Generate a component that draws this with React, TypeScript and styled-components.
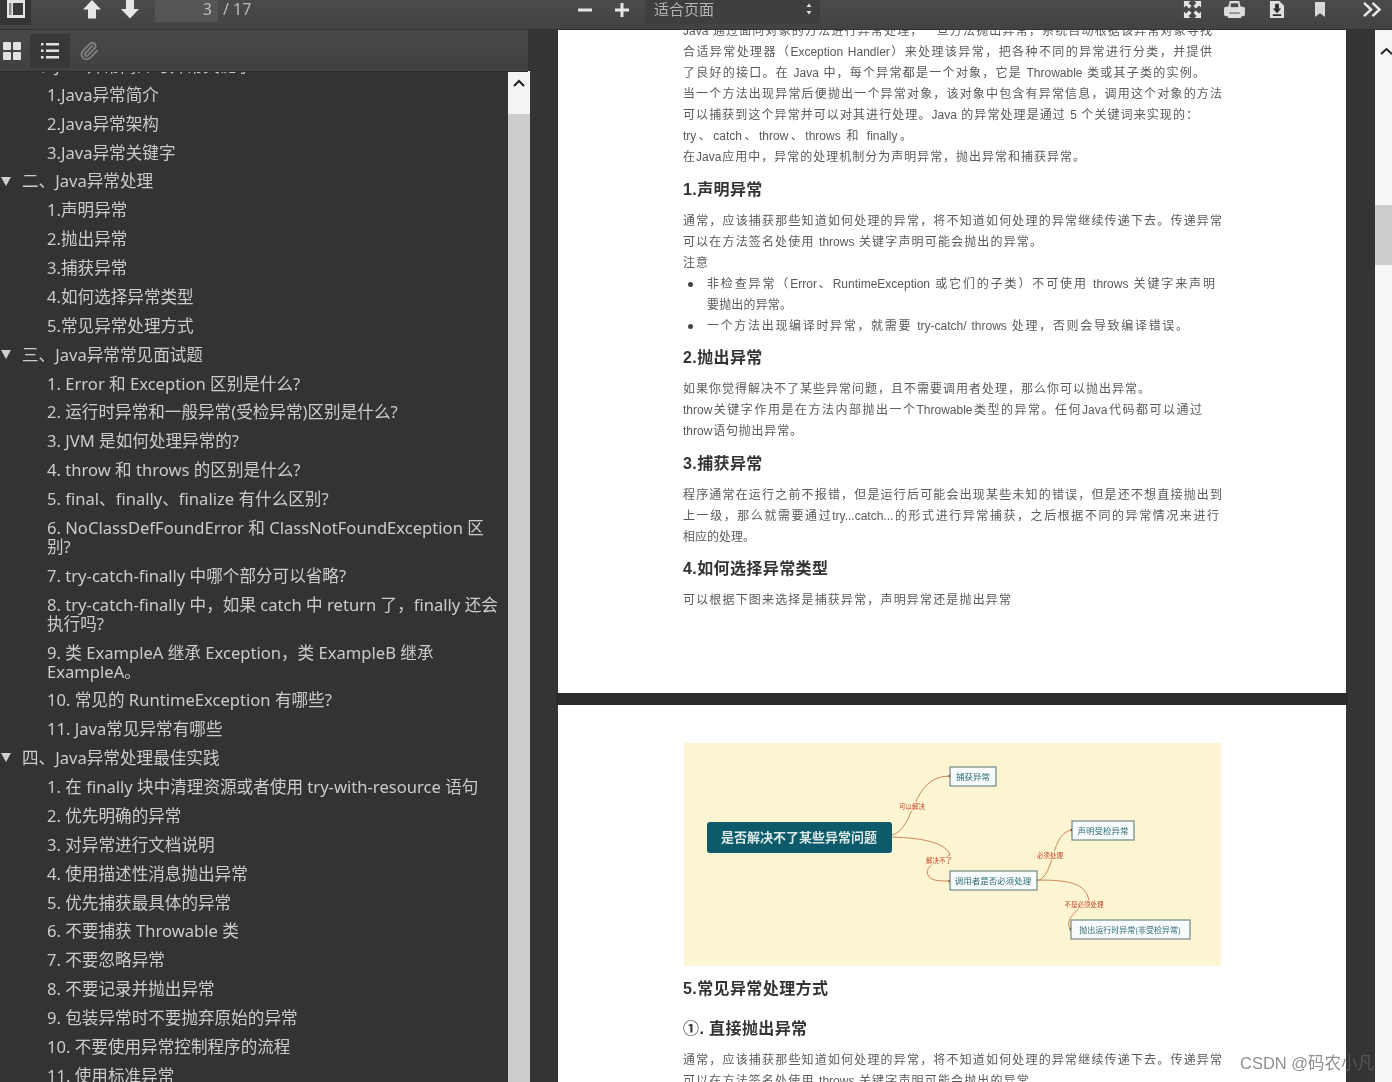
import React from "react";
import styled, { createGlobalStyle } from "styled-components";
import { Paperclip } from "lucide-react";

const Global = createGlobalStyle`
  html, body { margin: 0; padding: 0; background: #333; }
  body { width: 1392px; height: 1082px; overflow: hidden; font-family: "Noto Sans", "Noto Sans CJK SC", sans-serif; }
`;

const Shell = styled.div`
  width: 1392px; height: 1082px; display: flex; flex-direction: column; overflow: hidden; position: relative;
`;
const Toolbar = styled.header`
  flex: none; height: 30px; display: flex; align-items: flex-start; color: #ddd;
  background: linear-gradient(#4b4b4b, #424242); box-shadow: inset 0 -1px 0 #333;
`;
const ToggleButton = styled.div`
  flex: none; width: 31px; height: 25px; background: #353535; display: flex; align-items: flex-start; justify-content: center;
`;
const ToolIcon = styled.div<{ $w: number; $ml?: number }>`
  flex: none; width: ${p => p.$w}px; margin-left: ${p => p.$ml ?? 0}px; height: 19px;
  display: flex; align-items: center; justify-content: center; filter: blur(.45px);
`;
const PageInput = styled.div`
  flex: none; width: 63px; height: 22px; margin-left: 6px; background: #555; color: #bbb; font-size: 16px;
  line-height: 18px; text-align: right; padding-right: 6px; box-sizing: border-box; filter: blur(.4px);
`;
const PageCount = styled.div`
  flex: none; width: 343px; margin-left: 5px; color: #b8b8b8; font-size: 16px; line-height: 18px; filter: blur(.4px);
`;
const ZoomSelect = styled.div`
  flex: none; width: 175px; height: 24px; margin-left: 4px; background: #3f3f3f; color: #b5b5b5; font-size: 15px;
  line-height: 18px; padding: 0 8px 0 9px; box-sizing: border-box; display: flex; justify-content: space-between;
`;
const SelectLabel = styled.span`filter: blur(.5px);`;
const ToolSpacer = styled.div`flex: 1;`;

const Main = styled.div`flex: 1; min-height: 0; display: flex;`;
const Sidebar = styled.aside`flex: none; width: 530px; display: flex; flex-direction: column; background: #333;`;
const TabBar = styled.div`
  flex: none; width: 528px; height: 41px; display: flex; align-items: center; gap: 6px;
  background: linear-gradient(#484848, #414141); box-shadow: 0 1px 0 #2e2e2e; position: relative; z-index: 1;
`;
const Tab = styled.div<{ $active?: boolean; $w: number }>`
  flex: none; width: ${p => p.$w}px; height: 34px; display: flex; align-items: center; justify-content: center;
  background: ${p => (p.$active ? "#383838" : "transparent")}; filter: blur(.35px);
`;
const SideBody = styled.div`flex: 1; min-height: 0; display: flex;`;
const TocList = styled.nav`flex: 1; min-width: 0; overflow: hidden; background: #333;`;
const TocInner = styled.div`margin-top: -20px;`;
const TocRow = styled.div<{ $top?: boolean }>`
  position: relative; padding: 4.95px 0 4.95px ${p => (p.$top ? 22 : 47)}px; font-size: 16.6px; line-height: 19px;
  color: #cbcbcb; white-space: pre-line; filter: blur(.5px);
`;
const Caret = styled.i`
  position: absolute; left: 1px; top: 10px; width: 0; height: 0;
  border-left: 5px solid transparent; border-right: 5px solid transparent; border-top: 9px solid #d0d0d0;
`;
const SideScroll = styled.div`flex: none; width: 22px; background: #cdcdcd; display: flex; flex-direction: column;`;
const ScrollCap = styled.div`
  flex: none; height: 43px; background: #f4f4f4; display: flex; justify-content: center; padding-top: 8px; box-sizing: border-box;
`;
const Viewer = styled.main`flex: 1; min-width: 0; display: flex;`;
const Pages = styled.div`flex: 1; min-width: 0; overflow: hidden; padding: 0 29px 0 28px; background: #343434;`;
const Page = styled.section<{ $clip?: boolean }>`
  background: #fff; width: 788px; box-sizing: border-box; padding-left: 125px;
  ${p => p.$clip
    ? "margin-top: -9px; height: 672px;"
    : "height: 420px; padding-top: 38px;"}
`;
const PageGap = styled.div`height: 12px; background: #2b2b2b; margin: 0 0 0 -2px; width: 792px;`;
const Line = styled.div<{ $w: number }>`
  width: ${p => p.$w}px; height: 21px; line-height: 21px; font-size: 12px; color: #5a5a5a; white-space: nowrap;
  text-align: justify; text-align-last: justify; filter: blur(.45px);
  font-family: "Liberation Sans", "Noto Sans CJK SC", sans-serif;
`;
const Heading = styled.h3<{ $mt?: number }>`
  margin: ${p => p.$mt ?? 10.5}px 0 11px; height: 21px; line-height: 21px; font-size: 16px; font-weight: 700; color: #333;
  letter-spacing: .4px; filter: blur(.4px); font-family: "Liberation Sans", "Noto Sans CJK SC", sans-serif;
`;
const Bullet = styled.div`display: flex;`;
const Dot = styled.span`
  flex: none; width: 5px; height: 5px; border-radius: 50%; background: #444; margin: 8px 14px 0 5px; filter: blur(.3px);
`;
const MindMap = styled.svg`
  display: block; width: 537px; height: 223px; margin: 0 0 12px 1px; background: #fdf5d2;
`;
const MainScroll = styled.div`
  flex: none; width: 17px; background: #f6f6f8; display: flex; flex-direction: column; align-items: stretch;
`;
const MainChevron = styled.div`flex: none; height: 175px; padding: 8px 0 0 5px; box-sizing: border-box;`;
const MainThumb = styled.div`flex: none; height: 60px; background: #cdcdcd;`;
const Watermark = styled.div`
  position: absolute; left: 1240px; top: 1052px; font-size: 16.5px; line-height: 22px; color: rgba(100, 100, 100, .72);
  font-family: "Liberation Sans", "Noto Sans CJK SC", sans-serif; white-space: nowrap; filter: blur(.3px);
`;

const toc: { t: string; top?: boolean }[] = [
  { t: "一、Java异常简介与异常关键字", top: true },
  { t: "1.Java异常简介" }, { t: "2.Java异常架构" }, { t: "3.Java异常关键字" },
  { t: "二、Java异常处理", top: true },
  { t: "1.声明异常" }, { t: "2.抛出异常" }, { t: "3.捕获异常" }, { t: "4.如何选择异常类型" }, { t: "5.常见异常处理方式" },
  { t: "三、Java异常常见面试题", top: true },
  { t: "1. Error 和 Exception 区别是什么?" },
  { t: "2. 运行时异常和一般异常(受检异常)区别是什么?" },
  { t: "3. JVM 是如何处理异常的?" },
  { t: "4. throw 和 throws 的区别是什么?" },
  { t: "5. final、finally、finalize 有什么区别?" },
  { t: "6. NoClassDefFoundError 和 ClassNotFoundException 区\n别?" },
  { t: "7. try-catch-finally 中哪个部分可以省略?" },
  { t: "8. try-catch-finally 中，如果 catch 中 return 了，finally 还会\n执行吗?" },
  { t: "9. 类 ExampleA 继承 Exception，类 ExampleB 继承\nExampleA。" },
  { t: "10. 常见的 RuntimeException 有哪些?" },
  { t: "11. Java常见异常有哪些" },
  { t: "四、Java异常处理最佳实践", top: true },
  { t: "1. 在 finally 块中清理资源或者使用 try-with-resource 语句" },
  { t: "2. 优先明确的异常" },
  { t: "3. 对异常进行文档说明" },
  { t: "4. 使用描述性消息抛出异常" },
  { t: "5. 优先捕获最具体的异常" },
  { t: "6. 不要捕获 Throwable 类" },
  { t: "7. 不要忽略异常" },
  { t: "8. 不要记录并抛出异常" },
  { t: "9. 包装异常时不要抛弃原始的异常" },
  { t: "10. 不要使用异常控制程序的流程" },
  { t: "11. 使用标准异常" },
];

const Up = () => <svg width="20" height="19" viewBox="0 0 20 19"><path d="M10 0 19 9.500H14V18.500H6V9.500H1Z" fill="#e6e6e6" /></svg>;
const Down = () => <svg width="20" height="19" viewBox="0 0 20 19"><path d="M10 18.500 19 9H14V0H6V9H1Z" fill="#e6e6e6" /></svg>;

const App = () => (
  <Shell>
    <Global />
    <Toolbar>
      <ToggleButton>
        <svg width="20" height="20" viewBox="0 0 20 20">
          <rect x="1" y="0" width="18" height="18" fill="#e4e4e4" />
          <rect x="7" y="3" width="10" height="12" fill="#3a3a3a" />
          <rect x="3" y="3" width="2.500" height="12" fill="#8a8a8a" />
        </svg>
      </ToggleButton>
      <ToolIcon $w={38} $ml={42}><Up /></ToolIcon>
      <ToolIcon $w={38}><Down /></ToolIcon>
      <PageInput>3</PageInput>
      <PageCount>/ 17</PageCount>
      <ToolIcon $w={38}>
        <svg width="14" height="4" viewBox="0 0 14 4"><rect width="14" height="3" y=".5" fill="#e6e6e6" /></svg>
      </ToolIcon>
      <ToolIcon $w={38} $ml={-1}>
        <svg width="14" height="14" viewBox="0 0 14 14"><path d="M5.500 0h3v5.500H14v3H8.500V14h-3V8.500H0v-3h5.500Z" fill="#e6e6e6" /></svg>
      </ToolIcon>
      <ZoomSelect>
        <SelectLabel>适合页面</SelectLabel>
        <svg width="6" height="14" viewBox="0 0 6 14" fill="#ddd" style={{ marginTop: 2 }}>
          <path d="M3 1.500 5.500 5H.5Z" /><path d="M3 12.500 5.500 9H.5Z" />
        </svg>
      </ZoomSelect>
      <ToolSpacer />
      <ToolIcon $w={42}>
        <svg width="19" height="19" viewBox="0 0 20 20" fill="#e4e4e4">
          <path d="M1 1h7L5.800 3.200 9 6.400 6.400 9 3.200 5.800 1 8Z" />
          <path d="M19 1v7l-2.200-2.200L13.600 9 11 6.400l3.200-3.200L12 1Z" />
          <path d="M1 19v-7l2.200 2.200L6.400 11 9 13.600l-3.200 3.200L8 19Z" />
          <path d="M19 19h-7l2.200-2.200L11 13.600l2.600-2.600 3.200 3.200L19 12Z" />
        </svg>
      </ToolIcon>
      <ToolIcon $w={43}>
        <svg width="21" height="19" viewBox="0 0 22 20">
          <path d="M6 1h10l1.500 6H20a2 2 0 0 1 2 2v6a2 2 0 0 1-2 2h-2v2H4v-2H2a2 2 0 0 1-2-2V9a2 2 0 0 1 2-2h2.500Z" fill="#dedede" />
          <rect x="7" y="3.500" width="8" height="4" fill="#4a4a4a" />
          <rect x="5.500" y="13" width="11" height="1.500" fill="#777" />
        </svg>
      </ToolIcon>
      <ToolIcon $w={42}>
        <svg width="16" height="19" viewBox="0 0 17 20">
          <path d="M1 1h10l5 5v13H1Z" fill="#e0e0e0" />
          <path d="M6.500 4h4v5H13l-4.500 5L4 9h2.500Z M4 15h9v2H4Z" fill="#2e2e2e" />
        </svg>
      </ToolIcon>
      <ToolIcon $w={43}>
        <svg width="10" height="17" viewBox="0 0 12 18"><path d="M0 0h12v18L6 13.500 0 18Z" fill="#d8d8d8" /></svg>
      </ToolIcon>
      <ToolIcon $w={40} $ml={11}>
        <svg width="21" height="17" viewBox="0 0 22 18" fill="none" stroke="#e8e8e8" strokeWidth="2.600">
          <path d="M2 2l7.500 7L2 16" /><path d="M11 2l7.500 7-7.500 7" />
        </svg>
      </ToolIcon>
    </Toolbar>
    <Main>
      <Sidebar>
        <TabBar>
          <Tab $w={24}>
            <svg width="18" height="18" viewBox="0 0 18 18" fill="#e2e2e2">
              <rect width="8" height="8" rx="1" /><rect x="10" width="8" height="8" rx="1" />
              <rect y="10" width="8" height="8" rx="1" /><rect x="10" y="10" width="8" height="8" rx="1" />
            </svg>
          </Tab>
          <Tab $w={40} $active>
            <svg width="20" height="20" viewBox="0 0 20 20" fill="#e2e2e2">
              <rect x="1" y="2" width="2.500" height="2.500" /><rect x="6" y="2" width="13" height="2.500" />
              <rect x="1" y="8.500" width="2.500" height="2.500" /><rect x="6" y="8.500" width="13" height="2.500" />
              <rect x="1" y="15" width="2.500" height="2.500" /><rect x="6" y="15" width="13" height="2.500" />
            </svg>
          </Tab>
          <Tab $w={26}>
            <Paperclip size={20} color="#7c7c7c" strokeWidth={2.4} />
          </Tab>
        </TabBar>
        <SideBody>
          <TocList>
            <TocInner>
              {toc.map((r, i) => (
                <TocRow key={i} $top={r.top}>
                  {r.top && i > 0 ? <Caret /> : null}
                  {r.t}
                </TocRow>
              ))}
            </TocInner>
          </TocList>
          <SideScroll>
            <ScrollCap>
              <svg width="12" height="8" viewBox="0 0 12 8" fill="none" stroke="#222" strokeWidth="2"><path d="M1 7l5-5 5 5" /></svg>
            </ScrollCap>
          </SideScroll>
        </SideBody>
      </Sidebar>
      <Viewer>
        <Pages>
          <Page $clip>
            <Line $w={529}>Java 通过面向对象的方法进行异常处理，一旦方法抛出异常，系统自动根据该异常对象寻找</Line>
            <Line $w={529}>合适异常处理器（Exception Handler）来处理该异常，把各种不同的异常进行分类，并提供</Line>
            <Line $w={522}>了良好的接口。在 Java 中，每个异常都是一个对象，它是 Throwable 类或其子类的实例。</Line>
            <Line $w={539}>当一个方法出现异常后便抛出一个异常对象，该对象中包含有异常信息，调用这个对象的方法</Line>
            <Line $w={515}>可以捕获到这个异常并可以对其进行处理。Java 的异常处理是通过 5 个关键词来实现的：</Line>
            <Line $w={229}>try、catch、throw、throws 和 finally。</Line>
            <Line $w={402}>在Java应用中，异常的处理机制分为声明异常，抛出异常和捕获异常。</Line>
            <Heading>1.声明异常</Heading>
            <Line $w={539}>通常，应该捕获那些知道如何处理的异常，将不知道如何处理的异常继续传递下去。传递异常</Line>
            <Line $w={359}>可以在方法签名处使用 throws 关键字声明可能会抛出的异常。</Line>
            <Line $w={25}>注意</Line>
            <Bullet>
              <Dot />
              <div>
                <Line $w={508}>非检查异常（Error、RuntimeException 或它们的子类）不可使用 throws 关键字来声明</Line>
                <Line $w={85}>要抛出的异常。</Line>
              </div>
            </Bullet>
            <Bullet>
              <Dot />
              <Line $w={481}>一个方法出现编译时异常，就需要 try-catch/ throws 处理，否则会导致编译错误。</Line>
            </Bullet>
            <Heading>2.抛出异常</Heading>
            <Line $w={467}>如果你觉得解决不了某些异常问题，且不需要调用者处理，那么你可以抛出异常。</Line>
            <Line $w={519}>throw关键字作用是在方法内部抛出一个Throwable类型的异常。任何Java代码都可以通过</Line>
            <Line $w={119}>throw语句抛出异常。</Line>
            <Heading>3.捕获异常</Heading>
            <Line $w={539}>程序通常在运行之前不报错，但是运行后可能会出现某些未知的错误，但是还不想直接抛出到</Line>
            <Line $w={536}>上一级，那么就需要通过try...catch...的形式进行异常捕获，之后根据不同的异常情况来进行</Line>
            <Line $w={67}>相应的处理。</Line>
            <Heading>4.如何选择异常类型</Heading>
            <Line $w={328}>可以根据下图来选择是捕获异常，声明异常还是抛出异常</Line>
          </Page>
          <PageGap />
          <Page>
            <MindMap viewBox="0 0 537 223">
              <g fill="none" stroke="#c9885a" strokeWidth="1">
                <path d="M208 92C232 86 226 33 266 33" />
                <path d="M208 94C240 95 262 100 266 112C256 118 240 122 244 132C246 138 256 138 266 138" />
                <path d="M353 138C372 132 366 90 388 87" />
                <path d="M353 137C385 137 402 140 405 158C396 164 378 178 387 186" />
              </g>
              <g fill="#7a3020">
                <circle cx="266" cy="33" r="1.600" /><circle cx="266" cy="138" r="1.600" />
                <circle cx="388" cy="87" r="1.600" /><circle cx="387" cy="186" r="1.600" />
              </g>
              <g fontFamily="'Noto Sans CJK SC', sans-serif" style={{ filter: "blur(.4px)" }}>
                <rect x="23" y="79" width="185" height="31" rx="3" fill="#0c5a6a" />
                <text x="115" y="99" textAnchor="middle" fontSize="13" fontWeight="700" fill="#dbe8e6">是否解决不了某些异常问题</text>
                <g fill="#f8fbfb" stroke="#6f8a88" strokeWidth="1.200">
                  <rect x="266" y="24" width="46" height="19" />
                  <rect x="388" y="78" width="62" height="19" />
                  <rect x="266" y="128" width="87" height="19" />
                  <rect x="387" y="177" width="119" height="19" />
                </g>
                <g fill="#2f6c78" fontSize="8.500" textAnchor="middle">
                  <text x="289" y="37">捕获异常</text>
                  <text x="419" y="91">声明受检异常</text>
                  <text x="309" y="141">调用者是否必须处理</text>
                  <text x="446" y="190" fontSize="8">抛出运行时异常(非受检异常)</text>
                </g>
                <g fill="#c8452a" fontSize="6.500" textAnchor="middle" stroke="#fdf5d2" strokeWidth="2" paintOrder="stroke">
                  <text x="228" y="66">可以解决</text>
                  <text x="255" y="120">解决不了</text>
                  <text x="366" y="115">必须处理</text>
                  <text x="400" y="164">不是必须处理</text>
                </g>
              </g>
            </MindMap>
            <Heading $mt={0}>5.常见异常处理方式</Heading>
            <Heading $mt={19}>①. 直接抛出异常</Heading>
            <Line $w={539}>通常，应该捕获那些知道如何处理的异常，将不知道如何处理的异常继续传递下去。传递异常</Line>
            <Line $w={359}>可以在方法签名处使用 throws 关键字声明可能会抛出的异常。</Line>
          </Page>
        </Pages>
        <MainScroll>
          <MainChevron>
            <svg width="13" height="8" viewBox="0 0 13 8" fill="none" stroke="#222" strokeWidth="2"><path d="M1 7l5.500-5 5.500 5" /></svg>
          </MainChevron>
          <MainThumb />
        </MainScroll>
      </Viewer>
    </Main>
    <Watermark>CSDN @码农小凡</Watermark>
  </Shell>
);

export default App;
